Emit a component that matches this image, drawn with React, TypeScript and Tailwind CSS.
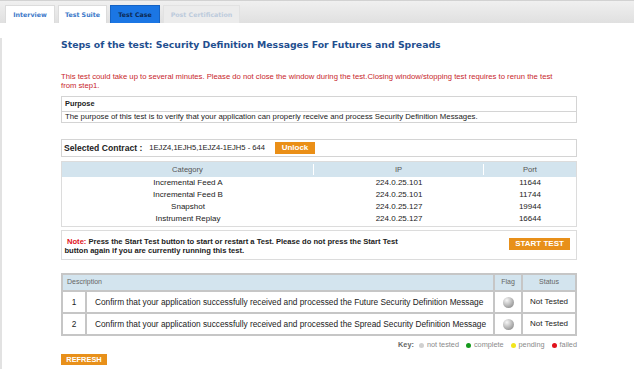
import React from "react";

const tabs = [
  { label: "Interview", w: "w-[50px]", cls: "bg-white text-[#3b78c9] border border-[#dcdcdc]" },
  { label: "Test Suite", w: "w-[49px]", cls: "bg-white text-[#3b78c9] border border-[#dcdcdc]" },
  { label: "Test Case", w: "w-[50px]", cls: "bg-[#1b76e4] text-[#0d2a55] border border-[#1563c4]" },
  { label: "Post Certification", w: "w-[77px]", cls: "bg-[#ececec] text-[#bccbdc] border border-[#e2e2e2]" },
];

const feeds = [
  ["Incremental Feed A", "224.0.25.101", "11644"],
  ["Incremental Feed B", "224.0.25.101", "11744"],
  ["Snapshot", "224.0.25.127", "19944"],
  ["Instrument Replay", "224.0.25.127", "16644"],
];

const steps = [
  "Confirm that your application successfully received and processed the Future Security Definition Message",
  "Confirm that your application successfully received and processed the Spread Security Definition Message",
];

function Flag() {
  return (
    <span className="inline-block h-[11px] w-[11px] rounded-full bg-[radial-gradient(circle_at_35%_30%,#f6f6f6,#acacac_60%,#7a7a7a)]" />
  );
}

function Dot({ color }: { color: string }) {
  return <span className={`mr-[3px] inline-block h-[5px] w-[5px] rounded-full ${color}`} />;
}

export default function App() {
  return (
    <div className="h-[369px] w-[634px] overflow-hidden bg-white font-['Liberation_Sans',Arial,sans-serif] text-[#222]">
      {/* tab strip */}
      <div className="flex h-[23px] items-end gap-[3px] border-t border-[#d2d2d2] bg-gradient-to-b from-[#f0f0f0] to-[#e0e0e0] pl-[5px]">
        {tabs.map((t) => (
          <div
            key={t.label}
            className={`flex h-[18px] items-center justify-center border-b-0 font-['DejaVu_Sans',Verdana,sans-serif] text-[6.3px] font-bold ${t.w} ${t.cls}`}
          >
            {t.label}
          </div>
        ))}
      </div>

      <div className="h-[346px] border-l-2 border-[#e2e2e2] pl-[59px]">
        <div className="w-[516px]">
          <h1 className="mt-[15px] whitespace-nowrap font-['DejaVu_Sans',Verdana,sans-serif] text-[9.3px] font-bold leading-[14px] text-[#1f4f8f]">
            Steps of the test: Security Definition Messages For Futures and Spreads
          </h1>

          <p className="mt-[20px] pr-[22px] text-[7.7px] leading-[9px] text-[#c8262c]">
            This test could take up to several minutes. Please do not close the window during the test.Closing
            window/stopping test requires to rerun the test from step1.
          </p>

          {/* purpose */}
          <div className="mt-[6px] border border-[#d4d4d4]">
            <div className="flex h-[15px] items-center border-b border-[#d4d4d4] px-[3px] text-[7.4px] font-bold">
              Purpose
            </div>
            <div className="flex h-[10px] items-center px-[3px] text-[7.8px]">
              The purpose of this test is to verify that your application can properly receive and process Security
              Definition Messages.
            </div>
          </div>

          {/* contract */}
          <div className="mt-[16px] flex h-[18px] items-center border border-[#d4d4d4] px-[2px]">
            <span className="text-[8.6px] font-bold">Selected Contract :</span>
            <span className="ml-[7px] text-[7.6px]">1EJZ4,1EJH5,1EJZ4-1EJH5 - 644</span>
            <span className="ml-[10px] flex h-[12px] w-[40px] items-center justify-center bg-[#ea8f17] text-[8px] font-bold text-white">
              Unlock
            </span>
          </div>

          {/* feeds */}
          <div className="mt-[4px] border border-[#dcdcdc] pb-[1px]">
            <div className="grid h-[15px] grid-cols-[252px_170px_1fr] items-center bg-[#d3e4ee] text-center text-[7.6px] text-[#555]">
              <div className="border-r border-white">Category</div>
              <div className="border-r border-white">IP</div>
              <div>Port</div>
            </div>
            {feeds.map((f) => (
              <div
                key={f[0]}
                className="grid h-[12px] grid-cols-[252px_170px_1fr] items-center text-center text-[8px] leading-[12px]"
              >
                <div>{f[0]}</div>
                <div>{f[1]}</div>
                <div>{f[2]}</div>
              </div>
            ))}
          </div>

          {/* note */}
          <div className="mt-[3px] flex h-[30px] items-center justify-between border border-[#dcdcdc] pl-[5px] pr-[6px]">
            <div className="mt-[2px] flex w-[345px] text-[7.6px] font-bold leading-[9px]">
              <span className="mr-[2px] shrink-0 text-[#e0111b]">Note:</span>
              <p className="-ml-[24px] indent-[24px]">
                Press the Start Test button to start or restart a Test. Please do not press the Start Test button
                again if you are currently running this test.
              </p>
            </div>
            <span className="mb-[2px] flex h-[12px] w-[61px] items-center justify-center bg-[#e8901a] text-[8px] font-bold text-white">
              START TEST
            </span>
          </div>

          {/* steps */}
          <div className="mt-[13px] border-2 border-[#c6c6c6]">
            <div className="grid h-[15px] grid-cols-[1fr_28px_52px] bg-[#d3e4ee] text-[7px] text-[#666]">
              <div className="flex items-center border-r-2 border-[#c6c6c6] pl-[4px]">Description</div>
              <div className="flex items-center justify-center border-r-2 border-[#c6c6c6]">Flag</div>
              <div className="flex items-center justify-center">Status</div>
            </div>
            {steps.map((s, i) => (
              <div
                key={s}
                className="grid h-[22px] grid-cols-[24px_1fr_28px_52px] border-t-2 border-[#c6c6c6] text-[8.3px]"
              >
                <div className="flex items-center justify-center border-r-2 border-[#c6c6c6]">{i + 1}</div>
                <div className="flex items-center border-r-2 border-[#c6c6c6] pl-[8px]">{s}</div>
                <div className="flex items-center justify-center border-r-2 border-[#c6c6c6]">
                  <Flag />
                </div>
                <div className="flex items-center justify-center text-[8px]">Not Tested</div>
              </div>
            ))}
          </div>

          {/* key */}
          <div className="mt-[4px] flex h-[10px] items-center justify-end text-[7.3px] text-[#8a8a8a]">
            <span className="font-bold text-[#666]">Key:</span>
            <span className="ml-[5px] flex items-center">
              <Dot color="bg-[#d0d0d0]" />
              not tested
            </span>
            <span className="ml-[7px] flex items-center">
              <Dot color="bg-[#159a1c]" />
              complete
            </span>
            <span className="ml-[7px] flex items-center">
              <Dot color="bg-[#f2e61c]" />
              pending
            </span>
            <span className="ml-[7px] flex items-center">
              <Dot color="bg-[#e1111b]" />
              failed
            </span>
          </div>

          <div className="mt-[4px] flex h-[11px] w-[46px] items-center justify-center bg-[#e8901a] text-[7.4px] font-bold text-white">
            REFRESH
          </div>
        </div>
      </div>
    </div>
  );
}
